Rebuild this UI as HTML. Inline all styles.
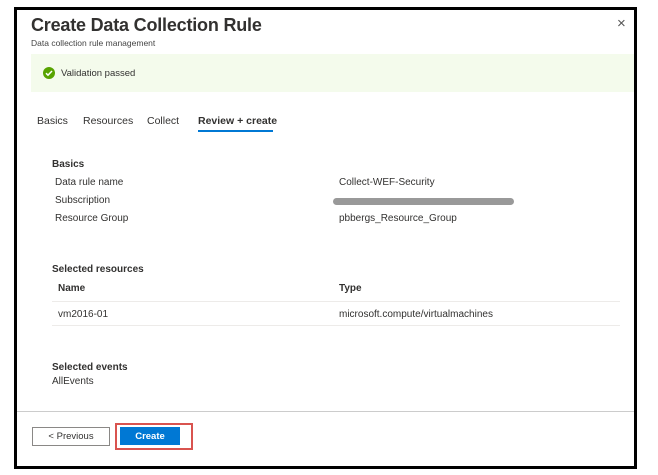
<!DOCTYPE html>
<html><head><meta charset="utf-8"><style>
body{margin:0;width:658px;height:475px;background:#fff;font-family:"Liberation Sans",sans-serif;color:#323130;position:relative;overflow:hidden}
.a{position:absolute;white-space:nowrap}
.t{font-size:10px;line-height:12px}
.b{font-weight:bold}
</style></head><body>
<div class="a" style="left:14px;top:7px;width:617px;height:456px;border:3px solid #000"></div>
<div class="a" style="left:31px;top:15px;font-size:18px;font-weight:bold;color:#323130;letter-spacing:-0.2px">Create Data Collection Rule</div>
<div class="a" style="left:31px;top:38px;font-size:8.5px;color:#444">Data collection rule management</div>
<div class="a" style="left:31px;top:54px;width:603px;height:38px;background:#f4fbec"></div>
<svg class="a" style="left:43px;top:67px" width="12" height="12"><circle cx="6" cy="6" r="6" fill="#57a300"/><path d="M3 6.2l2 2 4-4.2" stroke="#fff" stroke-width="1.5" fill="none"/></svg>
<div class="a t" style="left:61px;top:68px;font-size:9.5px">Validation passed</div>
<div class="a" style="left:617px;top:15px;font-size:15px;color:#555">×</div>
<div class="a t" style="left:37px;top:115px;font-size:10.5px">Basics</div>
<div class="a t" style="left:83px;top:115px;font-size:10.5px">Resources</div>
<div class="a t" style="left:147px;top:115px;font-size:10.5px">Collect</div>
<div class="a t b" style="left:198px;top:115px;font-size:10.5px">Review + create</div>
<div class="a" style="left:198px;top:130px;width:75px;height:2px;background:#0078d4"></div>
<div class="a t b" style="left:52px;top:159px">Basics</div>
<div class="a t" style="left:55px;top:177px">Data rule name</div>
<div class="a t" style="left:55px;top:195px">Subscription</div>
<div class="a t" style="left:55px;top:213px">Resource Group</div>
<div class="a t" style="left:339px;top:177px">Collect-WEF-Security</div>
<div class="a" style="left:333px;top:198px;width:181px;height:7px;border-radius:4px;background:#999"></div>
<div class="a t" style="left:339px;top:213px">pbbergs_Resource_Group</div>
<div class="a t b" style="left:52px;top:264px">Selected resources</div>
<div class="a t b" style="left:58px;top:283px">Name</div>
<div class="a t b" style="left:339px;top:283px">Type</div>
<div class="a" style="left:52px;top:301px;width:568px;height:1px;background:#edebe9"></div>
<div class="a t" style="left:58px;top:309px">vm2016-01</div>
<div class="a t" style="left:339px;top:309px">microsoft.compute/virtualmachines</div>
<div class="a" style="left:52px;top:325px;width:568px;height:1px;background:#edebe9"></div>
<div class="a t b" style="left:52px;top:362px">Selected events</div>
<div class="a t" style="left:52px;top:376px">AllEvents</div>
<div class="a" style="left:17px;top:411px;width:617px;height:1px;background:#ccc"></div>
<div class="a" style="left:32px;top:427px;width:76px;height:17px;border:1px solid #8a8886;font-size:9.5px;line-height:17px;text-align:center">&lt; Previous</div>
<div class="a" style="left:115px;top:423px;width:78px;height:27px;border:2px solid #d9534f;box-sizing:border-box"></div>
<div class="a" style="left:120px;top:427px;width:60px;height:18px;background:#0078d4;color:#fff;font-size:9.5px;font-weight:bold;line-height:19px;text-align:center">Create</div>
</body></html>
